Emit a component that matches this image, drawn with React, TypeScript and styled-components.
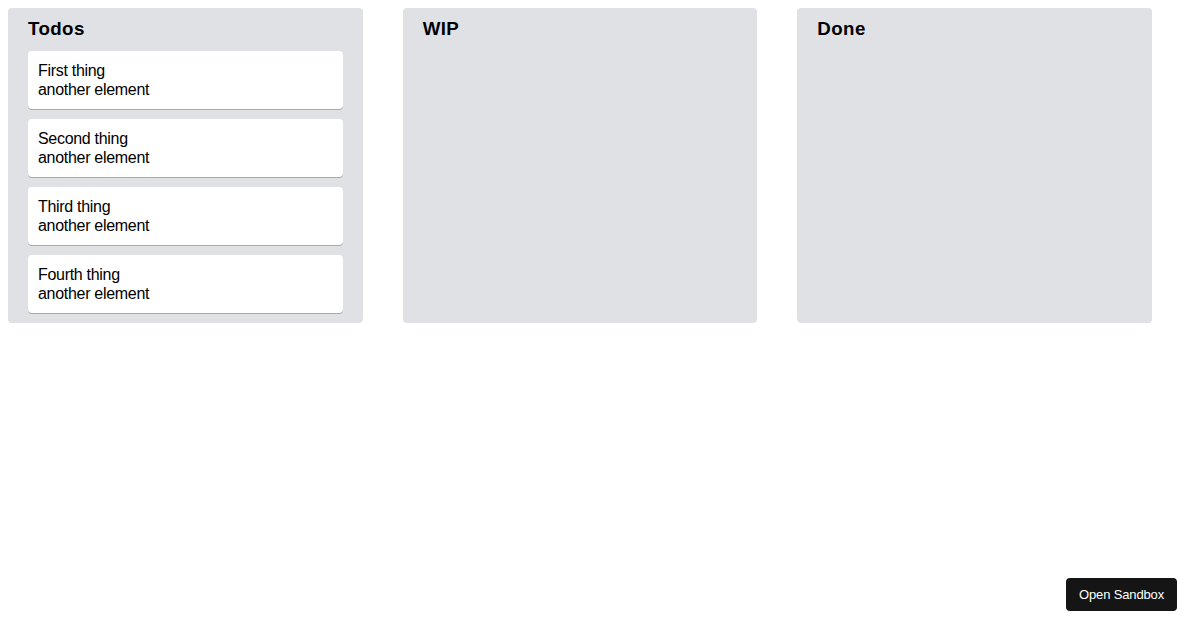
import React from "react";
import styled, { createGlobalStyle } from "styled-components";

const Global = createGlobalStyle`
  body {
    margin: 8px;
    font-family: "Liberation Sans", Arial, sans-serif;
    background: #fff;
    color: #000;
  }
`;

const Board = styled.div`
  display: flex;
  align-items: flex-start;
`;

const Column = styled.div`
  flex: 1;
  margin-right: 40px;
  background: #dfe1e4;
  border-radius: 4px;
  padding: 10px 20px;
  min-height: 295px;
`;

const Title = styled.h3`
  margin: 0 0 11px;
  font-size: 18.72px;
  font-weight: bold;
  line-height: 21.5px;
  letter-spacing: 0.4px;
`;

const Card = styled.div`
  background: #fff;
  border-radius: 4px;
  box-shadow: 0 1px 0 #a3a9b0;
  padding: 10px;
  font-size: 16px;
  line-height: 19px;
  letter-spacing: -0.3px;
  & + & {
    margin-top: 10px;
  }
`;

const SandboxButton = styled.button`
  position: fixed;
  right: 23px;
  bottom: 19px;
  height: 33px;
  padding: 0 13px;
  background: #151515;
  color: #fff;
  border: none;
  border-radius: 4px;
  font-family: "Liberation Sans", Arial, sans-serif;
  font-size: 13px;
  letter-spacing: -0.15px;
`;

const columns = [
  { title: "Todos", items: ["First thing", "Second thing", "Third thing", "Fourth thing"] },
  { title: "WIP", items: [] as string[] },
  { title: "Done", items: [] as string[] },
];

export default function App() {
  return (
    <>
      <Global />
      <Board>
        {columns.map((c) => (
          <Column key={c.title}>
            <Title>{c.title}</Title>
            {c.items.map((it) => (
              <Card key={it}>
                <div>{it}</div>
                <div>another element</div>
              </Card>
            ))}
          </Column>
        ))}
      </Board>
      <SandboxButton>Open Sandbox</SandboxButton>
    </>
  );
}
